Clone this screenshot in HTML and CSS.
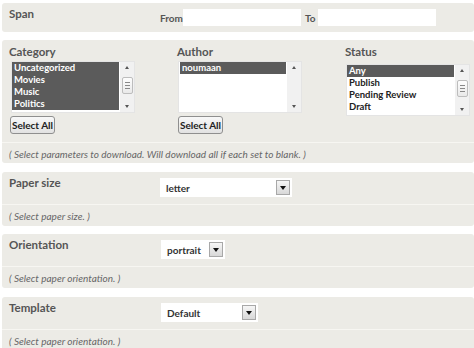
FILE: index.html
```html
<!DOCTYPE html>
<html>
<head>
<meta charset="utf-8">
<link rel="stylesheet" href="styles.css">
</head>
<body>
<div class="page">
  <section class="panel span-panel">
    <div class="label label-col">Span</div>
    <div class="range">
      <span class="range-label">From</span><span class="input"></span>
      <span class="range-label to">To</span><span class="input"></span>
    </div>
  </section>

  <section class="panel gap9">
    <div class="cols">
      <div class="col">
        <div class="label">Category</div>
        <div class="listbox">
          <ul class="options">
            <li class="sel">Uncategorized</li>
            <li class="sel">Movies</li>
            <li class="sel">Music</li>
            <li class="sel">Politics</li>
          </ul>
          <div class="scrollbar"><span class="up"></span><span class="thumb"><i></i><i></i><i></i></span><span class="down"></span></div>
        </div>
        <button class="btn">Select All</button>
      </div>
      <div class="col col-author">
        <div class="label">Author</div>
        <div class="listbox">
          <ul class="options">
            <li class="sel">noumaan</li>
          </ul>
          <div class="scrollbar"><span class="up"></span><span class="spacer"></span><span class="down"></span></div>
        </div>
        <button class="btn">Select All</button>
      </div>
      <div class="col col-status">
        <div class="label">Status</div>
        <div class="listbox">
          <ul class="options">
            <li class="sel">Any</li>
            <li>Publish</li>
            <li>Pending Review</li>
            <li>Draft</li>
          </ul>
          <div class="scrollbar"><span class="up"></span><span class="thumb"><i></i><i></i><i></i></span><span class="down"></span></div>
        </div>
      </div>
    </div>
    <div class="note">( Select parameters to download. Will download all if each set to blank. )</div>
  </section>

  <section class="panel">
    <div class="row">
      <div class="label label-col">Paper size</div>
      <div class="select w-paper"><span>letter</span><span class="arrow"></span></div>
    </div>
    <div class="note tall">( Select paper size. )</div>
  </section>

  <section class="panel gap9">
    <div class="row">
      <div class="label label-col">Orientation</div>
      <div class="select w-orient"><span>portrait</span><span class="arrow"></span></div>
    </div>
    <div class="note tall">( Select paper orientation. )</div>
  </section>

  <section class="panel">
    <div class="row">
      <div class="label label-col">Template</div>
      <div class="select w-template"><span>Default</span><span class="arrow"></span></div>
    </div>
    <div class="note tall">( Select paper orientation. )</div>
  </section>
</div>
</body>
</html>
```

FILE: styles.css
```css
* { box-sizing: border-box; }
html, body { margin: 0; padding: 0; background: #fff; }
body {
  font-family: Lato, "Open Sans", "DejaVu Sans", sans-serif;
  color: #555;
  width: 474px;
  height: 348px;
  overflow: hidden;
}
.page { padding: 3px 0 0 2px; }
.panel {
  background: #ecebe6;
  border-radius: 3px;
  margin-bottom: 8px;
}
.panel.gap9 { margin-bottom: 9px; }
.label {
  font-weight: 700;
  font-size: 11.5px;
  line-height: 14px;
  color: #555;
}
.label-col { width: 151px; flex: none; }

/* Span */
.span-panel {
  display: flex;
  height: 29px;
  padding: 4px 0 0 7px;
}
.range {
  display: flex;
  align-items: center;
  height: 17px;
  margin-top: 2px;
}
.range-label {
  font-size: 10px;
  font-weight: 700;
  color: #555;
  margin-right: 0;
}
.range-label.to { margin-left: 4px; margin-right: 2px; }
.input {
  display: block;
  width: 118px;
  height: 17px;
  background: #fff;
}

/* columns */
.cols {
  display: flex;
  height: 102px;
  padding: 5px 0 0 7px;
}
.col { width: 168px; flex: none; }
.col-status { width: auto; }
.col .listbox { margin: 2px 0 0 2px; }
.col-author .listbox { margin-left: 1px; }
.col-status .listbox { margin: 5px 0 0 1px; }

.listbox {
  display: flex;
  width: 124px;
  height: 52px;
  background: #fff;
  border: 1px solid #e4e4e4;
}
.options {
  list-style: none;
  margin: 0;
  padding: 0;
  width: 107px;
  flex: none;
}
.options li {
  height: 12px;
  line-height: 12px;
  font-size: 9.5px;
  font-weight: 700;
  color: #222;
  padding-left: 2px;
  white-space: nowrap;
}
.options li.sel { background: #5b5b5b; color: #fff; }
.col-author .options { padding: 0 0 0 1px; }

.scrollbar {
  width: 14px;
  margin-left: 1px;
  background: #f1f1f1;
  display: flex;
  flex-direction: column;
  align-items: center;
  padding: 4px 0 4px;
}
.scrollbar .up, .scrollbar .down {
  width: 0; height: 0;
  border-left: 2.5px solid transparent;
  border-right: 2.5px solid transparent;
  flex: none;
}
.scrollbar .up { border-bottom: 3px solid #555; }
.scrollbar .down { border-top: 3px solid #555; margin-top: auto; }
.scrollbar .thumb {
  margin-top: 8px;
  width: 11px;
  height: 17px;
  border: 1px solid #bdbdbd;
  border-radius: 2px;
  background: linear-gradient(#fdfdfd, #e9e9e9);
  display: flex;
  flex-direction: column;
  justify-content: center;
  align-items: center;
  gap: 2px;
}
.scrollbar .thumb i {
  display: block;
  width: 5px;
  height: 1px;
  background: #888;
}

.btn {
  display: block;
  margin: 3px 0 0 1px;
  width: 45px;
  height: 18px;
  padding: 0;
  font-family: inherit;
  font-size: 10px;
  font-weight: 700;
  color: #222;
  border: 1px solid #8f8f8f;
  border-radius: 3px;
  background: linear-gradient(#f8f8f8, #e2e2e2);
}
.col-author .btn { margin-left: 1px; }

.note {
  border-top: 1px solid #f7f6f2;
  padding: 5px 0 0 7px;
  height: 21px;
  font-size: 10px;
  font-style: italic;
  line-height: 12px;
  color: #666;
  white-space: nowrap;
}
.note.tall { height: 22px; }

/* rows */
.row {
  display: flex;
  height: 32px;
  padding: 4px 0 0 7px;
}
.select {
  display: flex;
  align-items: center;
  justify-content: space-between;
  height: 19px;
  margin-top: 2px;
  background: #fff;
  padding: 0 2px 0 6px;
  font-size: 10px;
  font-weight: 700;
  color: #333;
}
.w-paper { width: 132px; }
.w-orient { width: 64px; margin-left: 1px; }
.w-template { width: 97px; margin-left: 1px; }
.arrow {
  width: 14px;
  height: 15px;
  border: 1px solid #a8a8a8;
  background: linear-gradient(#f6f6f6, #d8d8d8);
  display: flex;
  align-items: center;
  justify-content: center;
}
.arrow::after {
  content: "";
  border-left: 3px solid transparent;
  border-right: 3px solid transparent;
  border-top: 4px solid #111;
}
```
